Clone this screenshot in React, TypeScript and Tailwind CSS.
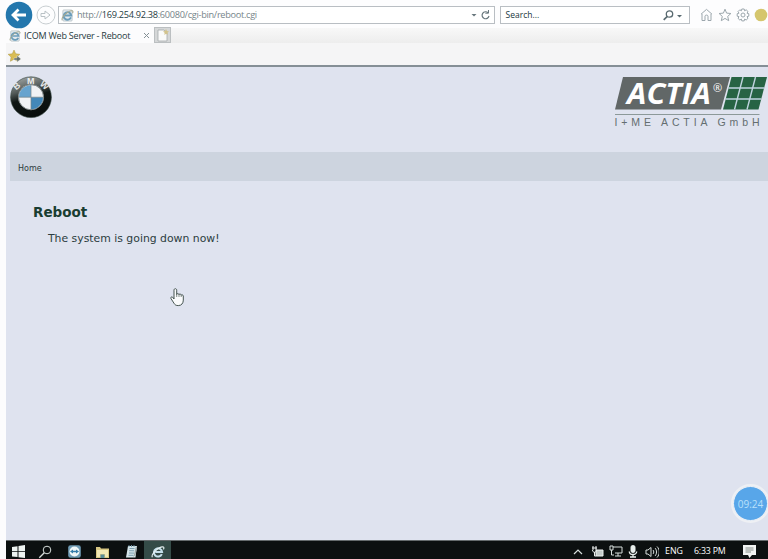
import React from "react";

function IEIcon({ size = 12, light = false }: { size?: number; light?: boolean }) {
  return (
    <svg width={size} height={size} viewBox="0 0 14 14" fill="none" className="shrink-0">
      {!light && <rect x="2" y="1" width="10" height="12" rx="1" fill="#e4ebef" stroke="#a9b5bb" strokeWidth=".7" />}
      <path d="M10.8 9.1A4.1 4.1 0 1 1 11.1 7H4.2" stroke={light ? "#c5e0ea" : "#6b9dba"} strokeWidth="2" />
      <path d="M1.4 12.2C-.5 9.5 8.5.7 12.4 2c.8.4.5 1.7 0 2.4" stroke={light ? "#e9f3f4" : "#a7a98d"} strokeWidth="1.1" />
    </svg>
  );
}

function BackButton() {
  return (
    <svg width="28" height="28" viewBox="0 0 28 28" className="shrink-0">
      <circle cx="14" cy="14" r="13.3" fill="#2377ad" />
      <path d="M21 14H8.5M13.5 8.5 8 14l5.5 5.5" fill="none" stroke="white" strokeWidth="2.8" />
    </svg>
  );
}

function ForwardButton() {
  return (
    <svg width="20" height="20" viewBox="0 0 20 20" className="shrink-0" fill="none">
      <circle cx="10" cy="10" r="9" fill="#fdfdfe" stroke="#c8ced1" />
      <path d="M5 8.5h4V6l5 4-5 4v-2.5H5z" stroke="#b9c1c5" strokeWidth="1" />
    </svg>
  );
}

function BrowserTools() {
  return (
    <div className="ml-[10px] flex items-center">
      <svg width="13" height="14" viewBox="0 0 13 14" fill="none" stroke="#9ca7ad">
        <path d="M1 6.2 6.5 1.4 12 6.2M2 6v6.5h3V8.2c0-1.5 3-1.5 3 0v4.3h3V6" />
      </svg>
      <svg width="14" height="14" viewBox="0 0 14 14" fill="none" stroke="#9ca7ad" className="ml-[5px]">
        <path d="m7 1.2 1.6 3.9 4.3.4-3.2 2.9 1 4.3L7 10.4l-3.7 2.3 1-4.3-3.2-2.9 4.3-.4z" />
      </svg>
      <svg width="14" height="14" viewBox="0 0 14 14" fill="none" stroke="#9ca7ad" className="ml-[4px]">
        <path d="M5.8 1h2.4l.4 1.8 1.6-1 1.8 1.8-1 1.6 1.8.5v2.5l-1.8.5 1 1.6-1.8 1.7-1.6-.9-.4 1.8H5.8l-.4-1.8-1.6.9L2 10.3l1-1.6-1.8-.5V5.7L3 5.2 2 3.6l1.8-1.8 1.6 1z" />
        <circle cx="7" cy="7" r="2" />
      </svg>
      <svg width="14" height="14" viewBox="0 0 14 14" className="ml-[4px]">
        <circle cx="7" cy="7" r="6.3" fill="#d5c66d" />
      </svg>
    </div>
  );
}

function BmwLogo() {
  return (
    <svg width="42" height="43" viewBox="0 0 42 43" fontFamily="Liberation Sans, sans-serif" className="overflow-visible">
      <defs>
        <linearGradient id="rim" x1=".35" y1="0" x2=".65" y2="1">
          <stop stopColor="#9a9f9e" />
          <stop offset=".3" stopColor="#525a58" />
          <stop offset=".5" stopColor="#101715" />
          <stop offset="1" stopColor="#080d0c" />
        </linearGradient>
      </defs>
      <circle cx="21" cy="21.2" r="20.4" fill="url(#rim)" stroke="#35473f" strokeWidth=".6" />
      <circle cx="21" cy="21.2" r="12.6" fill="#f0f2f4" stroke="#7d8585" />
      <path d="M21 21.2V9.2a12 12 0 0 0-12 12z" fill="#66a3ce" />
      <path d="M21 21.2v12a12 12 0 0 0 12-12z" fill="#4388b9" />
      <path d="M21 9v24.4M8.8 21.2h24.4" stroke="#778486" strokeWidth=".7" />
      <text x="0" y="0" transform="translate(6.3 14.5) rotate(-42)" fontSize="9" fontWeight="700" fill="#e4e6e6">B</text>
      <text x="17" y="7.8" fontSize="9" fontWeight="700" fill="#eef0ef">M</text>
      <text x="0" y="0" transform="translate(29.2 8.8) rotate(42)" fontSize="9" fontWeight="700" fill="#e4e6e6">W</text>
    </svg>
  );
}

function ActiaLogo() {
  return (
    <svg width="154" height="52" viewBox="0 0 154 52" fontFamily="Open Sans, Noto Sans, sans-serif" className="overflow-visible">
      <path d="M9 1H116l-9 32.5H1z" fill="#616767" />
      <path d="M117.5 1H153l-8.5 32.5H109z" fill="#276344" />
      <path d="m129 1-8.5 32.5M141.5 1 133 33.5M114.5 12h36M111.5 23h36" stroke="#c0d3df" strokeWidth="1.4" />
      <text x="13" y="27.5" fontSize="28" fontStyle="italic" fontWeight="700" fill="white" textLength="84" lengthAdjust="spacingAndGlyphs">ACTIA</text>
      <text x="99" y="15.5" fontSize="11" fontStyle="italic" fill="white">®</text>
      <path d="M1 38.5h144.5" stroke="#8c9999" />
      <text x="0.5" y="49.5" fontFamily="Liberation Sans, sans-serif" fontSize="10.5" fill="#646e70" textLength="145">I+ME ACTIA GmbH</text>
    </svg>
  );
}

function Browser() {
  return (
    <header className="relative h-[67px] shrink-0 border-b-2 border-[#858f96] bg-[#f5f5f6]">
      <div className="flex h-[28px] items-center bg-[#fdfdfe] pt-[2px]">
        <div className="z-10 -ml-px"><BackButton /></div>
        <div className="ml-[3px]"><ForwardButton /></div>
        <div className="ml-[2px] flex h-[18px] w-[438px] items-center border border-[#b9bec3] bg-white pl-[2px]">
          <IEIcon size={13} />
          <span className="ml-[3px] w-[190px] whitespace-nowrap text-[9.2px] leading-[14px] tracking-[-0.3px] text-[#76858a]">http://<span className="text-[#263c43]">169.254.92.38</span>:60080/cgi-bin/reboot.cgi</span>
          <svg width="22" height="12" viewBox="0 0 22 12" className="ml-auto mr-[2px]" fill="none" stroke="#68777d">
            <path d="M1.5 5h5L4 7.5z" fill="#68777d" stroke="none" />
            <path d="M18 3.7A3.5 3.5 0 1 0 19 7" strokeWidth="1.2" />
            <path d="M18.5 1v3.2h-3.2" />
          </svg>
        </div>
        <div className="ml-[5px] flex h-[18px] w-[191px] items-center border border-[#b9bec3] bg-white px-[5px]">
          <span className="text-[8.5px] leading-[14px] text-[#20363c]">Search...</span>
          <svg width="22" height="13" viewBox="0 0 22 13" className="ml-auto" fill="none" stroke="#596a70">
            <circle cx="7.5" cy="5" r="3.2" strokeWidth="1.3" />
            <path d="m5.2 7.5-3.5 3.4" strokeWidth="1.7" />
            <path d="M15 6h5l-2.5 2.5z" fill="#596a70" stroke="none" />
          </svg>
        </div>
        <BrowserTools />
      </div>
      <div className="flex h-[15px] items-start bg-linear-to-b from-[#f8f8f8] to-[#ededed]">
        <div className="flex h-[15px] w-[148px] items-center bg-[#fcfcfd] pl-[3px]">
          <IEIcon />
          <span className="ml-[3px] whitespace-nowrap text-[9px] leading-[14px] tracking-[-0.22px] text-[#263a40]">ICOM Web Server - Reboot</span>
          <svg width="7" height="7" viewBox="0 0 7 7" className="ml-auto mr-[4px]"><path d="m1 1 5 5m0-5L1 6" stroke="#849095" /></svg>
        </div>
        <div className="-mt-px flex h-[16px] w-[17px] items-center justify-center border border-[#bbbfc1] bg-[#d5d7d8]">
          <svg width="12" height="13" viewBox="0 0 12 13"><path d="M1 1h6l3 3v8H1z" fill="#fafafa" stroke="#a4aaac" strokeWidth=".8" /><path d="m9 0 1 2 2 .4-1.5 1.4.3 2L9 4.8 7.4 6l.2-2.2L6 2.4 8 2z" fill="#d2c38d" /></svg>
        </div>
      </div>
      <div className="flex h-[22px] items-center pl-[2px]">
        <svg width="14" height="13" viewBox="0 0 14 13" className="mt-[4px]">
          <path d="m6 0 1.7 3.8 4.1.5-3 2.8.8 4.2L6 9.2l-3.6 2.1.7-4.2-3-2.8 4.2-.5z" fill="#d9bd54" stroke="#ad9640" strokeWidth=".5" />
          <path d="M6 8h3V5.5l4 3.6-4 3V10H6z" fill="#65716b" stroke="#f1f1e5" strokeWidth=".4" />
        </svg>
      </div>
    </header>
  );
}

function HandCursor() {
  return (
    <svg width="15" height="19" viewBox="0 0 15 19" className="absolute left-[164px] top-[221px]">
      <path d="M4 11V2.2c0-2 2.7-2 2.7 0v4.2c0-1.2 2.3-1 2.3.3 0-1 2.2-.8 2.2.5 0-.8 2.1-.5 2.1.8v4.1c0 3.1-1.8 5.5-5 5.5-2.3 0-3.3-.7-4.2-2.2L1 10.6c-.9-1.6 1.2-2.3 2.2-.8z" fill="#fafbfc" stroke="#34443f" strokeWidth=".9" />
      <path d="M6.7 6v3M9 6.7V9m2.2-1.8V9" stroke="#4c5a55" strokeWidth=".7" />
    </svg>
  );
}

function Taskbar() {
  return (
    <footer className="flex h-[19px] shrink-0 items-center overflow-hidden border-t border-[#656b6d] bg-[#0c1010] pt-[3px] text-white">
      <svg width="13" height="13" viewBox="0 0 13 13" className="ml-[6px]"><path d="m0 2 5.5-.8v5H0zm6.5-1L13 0v6.2H6.5zM0 7.1h5.5v5L0 11.4zm6.5 0H13V13l-6.5-.8z" fill="#eef3f1" /></svg>
      <svg width="14" height="14" viewBox="0 0 14 14" className="ml-[13px]" fill="none" stroke="#d7dedb"><circle cx="9" cy="5" r="3.8" /><path d="m6.3 7.8-5 5" strokeWidth="1.3" /></svg>
      <svg width="13" height="13" viewBox="0 0 13 13" className="ml-[16px]"><rect x=".2" y=".2" width="12.6" height="12.6" rx="2.3" fill="#6e9ab3" /><circle cx="6.5" cy="6.5" r="5" fill="#eff6f7" /><path d="m2 6.5 3-2v1.3h3V4.5l3 2-3 2V7.3H5v1.2z" fill="#347caa" /></svg>
      <svg width="13" height="12" viewBox="0 0 13 12" className="ml-[15px]"><path d="M0 1h4l1 1.4h8V12H0z" fill="#d8c783" /><path d="M1 4h11v7H9V8H4v3H1z" fill="#f2e8b5" /><path d="M4.5 8.5h4V12h-4z" fill="#598b98" /></svg>
      <svg width="13" height="13" viewBox="0 0 13 13" className="ml-[16px]"><path d="M3 1h9l-1.5 11.5H1z" fill="#d7e7eb" /><path d="m4.5 3.5 5 .1m-5.3 2.1 5 .1M4 8l5 .1M3.5 10.3h5M4 0v2M6.5 0v2M9 0v2" stroke="#7095a6" strokeWidth=".9" /><path d="m11 1-2 9-1 2 2.3-1.7L12 3z" fill="#9ba4a2" /></svg>
      <div className="-mt-[3px] ml-[6px] flex h-[19px] w-[27px] items-center justify-center bg-[#344b47] pt-[3px]"><IEIcon size={14} light /></div>
      <div className="ml-auto flex items-center pr-[12px]">
        <svg width="10" height="7" viewBox="0 0 10 7"><path d="m1 6 4-4 4 4" fill="none" stroke="#d6dddb" strokeWidth="1.2" /></svg>
        <svg width="13" height="12" viewBox="0 0 13 12" className="ml-[8px]"><path d="M5 4h7v6H5z" fill="#c4cbc9" stroke="#eef1f0" /><path d="M1 2h5M2 0v4m3-4v4M1.5 4c0 3 4 3 4 0M3.5 6v4H5" stroke="#eef1f0" fill="none" /></svg>
        <svg width="14" height="13" viewBox="0 0 14 13" className="ml-[5px]" fill="none" stroke="#d7dedc"><path d="M4 2h9v6H6M9 8v3m-3 0h6M1 1h3v4H1zm1.5 4v5H5" /></svg>
        <svg width="10" height="13" viewBox="0 0 10 13" className="ml-[5px]" fill="none" stroke="#e9efed"><rect x="3" y=".5" width="4" height="7" rx="1.7" fill="#e9efed" /><path d="M1.3 6.5c0 4 7.4 4 7.4 0M5 9.3V12m-3 0h6" strokeWidth="1.3" /></svg>
        <svg width="14" height="12" viewBox="0 0 14 12" className="ml-[7px]" fill="none" stroke="#d7dedc"><path d="M1 4h2l3-2.5v9L3 8H1zM8 4c1 1 1 3 0 4m2-6c2 2 2 6 0 8m2-9.5c3 3 3 8 0 11" /></svg>
        <span className="ml-[6px] w-[18px] whitespace-nowrap text-[8.8px] leading-[13px]">ENG</span>
        <span className="ml-[11px] w-[33px] whitespace-nowrap text-[8.8px] leading-[13px] tracking-[-0.2px]">6:33 PM</span>
        <svg width="13" height="13" viewBox="0 0 13 13" className="ml-[16px]"><path d="M0 0h13v10H9l-2.5 3L5 10H0z" fill="#f1f3f2" /><path d="M2.5 3h8m-8 2h8m-8 2H8" stroke="#6c7470" strokeWidth=".8" /></svg>
      </div>
    </footer>
  );
}

export default function App() {
  return (
    <div className="h-[559px] w-[768px] overflow-hidden bg-[#fcfcfd] pl-[6px] font-['Open_Sans','Noto_Sans',sans-serif]">
      <div className="flex h-full w-full flex-col">
        <Browser />
        <main className="relative min-h-0 flex-1 overflow-hidden bg-[#dfe3ef]">
          <div className="flex h-[85px] justify-between pl-[4px] pt-[9px]"><BmwLogo /><ActiaLogo /></div>
          <nav className="ml-[4px] flex h-[29px] items-center bg-[#cdd4df] pl-[8px] pt-[5px] font-['DejaVu_Sans',sans-serif] text-[8px] leading-none text-[#2d3d40]">Home</nav>
          <section className="pl-[27px] pt-[22px] font-['DejaVu_Sans',sans-serif]">
            <h1 className="text-[13.5px] font-bold leading-[18px] text-[#193d31]">Reboot</h1>
            <p className="ml-[15px] mt-[11px] whitespace-nowrap text-[10.85px] leading-[14px] text-[#2c3d40]">The system is going down now!</p>
          </section>
          <HandCursor />
          <div className="absolute bottom-[19px] right-0 flex h-[35px] w-[35px] items-center justify-center rounded-full border border-[#edf2f8] bg-[#58a6e9] text-[10px] leading-none text-[#b9e0fa] outline-2 outline-[#eef0f4]">09:24</div>
        </main>
        <Taskbar />
      </div>
    </div>
  );
}
